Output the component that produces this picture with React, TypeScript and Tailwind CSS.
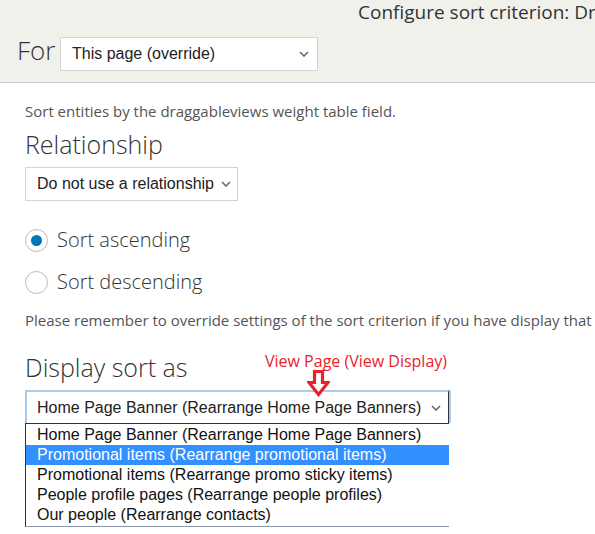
import React from "react";

const OPEN = "font-['Open_Sans','Noto_Sans',sans-serif]";
const ARIAL = "font-['Liberation_Sans',Arial,sans-serif]";

const Chevron = () => (
  <svg width="10" height="6" viewBox="0 0 10 6" className="shrink-0">
    <polyline points="1,1 5,5 9,1" fill="none" stroke="#6b6b6b" strokeWidth="1.6" />
  </svg>
);

const Radio = ({ checked, label }: { checked?: boolean; label: string }) => (
  <div className="flex h-[30px] items-center">
    <span className="flex h-[23px] w-[23px] items-center justify-center rounded-full border border-[#b9b9b9] bg-white">
      {checked && <span className="h-[11px] w-[11px] rounded-full bg-[#0074bd]" />}
    </span>
    <span className={`ml-[9px] text-[20px] font-light leading-[30px] text-[#333] ${OPEN}`}>{label}</span>
  </div>
);

const OPTIONS = [
  "Home Page Banner (Rearrange Home Page Banners)",
  "Promotional items (Rearrange promotional items)",
  "Promotional items (Rearrange promo sticky items)",
  "People profile pages (Rearrange people profiles)",
  "Our people (Rearrange contacts)",
];

export default function App() {
  return (
    <div className="relative h-[534px] w-[595px] overflow-hidden bg-white">
      {/* header */}
      <div className="h-[83px] border-b border-[#cdcdcd] bg-[#f1f1ec]">
        <div
          className={`overflow-hidden whitespace-nowrap pl-[358px] text-[19px] leading-[24px] text-[#333] ${OPEN}`}
        >
          Configure sort criterion: Draggableviews
        </div>
        <div className="mt-[13px] flex items-start pl-[17px]">
          <span className={`w-[43px] text-[26px] font-light leading-[26px] text-[#333] ${OPEN}`}>For</span>
          <div
            className={`flex h-[34px] w-[258px] items-center justify-between border border-[#d4d4d4] bg-white pl-[11px] pr-[8px] text-[16px] text-[#222] ${ARIAL}`}
          >
            <span>This page (override)</span>
            <Chevron />
          </div>
        </div>
      </div>

      {/* body */}
      <div className="px-[25px]">
        <p className={`mt-[18px] text-[15px] leading-[20px] text-[#555] ${OPEN}`}>
          Sort entities by the draggableviews weight table field.
        </p>
        <h2 className={`mt-[7px] text-[25px] font-light leading-[32px] text-[#333] ${OPEN}`}>Relationship</h2>
        <div
          className={`mt-[7px] flex h-[34px] w-[213px] items-center justify-between border border-[#d4d4d4] bg-white pl-[11px] pr-[6px] text-[16px] text-[#222] ${ARIAL}`}
        >
          <span>Do not use a relationship</span>
          <Chevron />
        </div>

        <div className="mt-[24px]">
          <Radio checked label="Sort ascending" />
        </div>
        <div className="mt-[12px]">
          <Radio label="Sort descending" />
        </div>

        <p className={`mt-[13px] whitespace-nowrap text-[15px] leading-[20px] text-[#555] ${OPEN}`}>
          Please remember to override settings of the sort criterion if you have display that
        </p>

        <div className="mt-[21px] grid grid-cols-[240px_auto] items-start">
          <h2 className={`text-[25px] font-light leading-[32px] text-[#333] ${OPEN}`}>Display sort as</h2>
          <span className={`text-[16px] leading-[20px] text-[#e8232b] ${OPEN}`}>View Page (View Display)</span>
        </div>

        <div className="mt-[7px] w-[424px]">
          <div
            className={`flex h-[33px] items-center justify-between border-l-2 border-r border-t-2 border-[#a8cbee] border-r-[#333] bg-white pl-[10px] pr-[7px] text-[16px] text-[#222] shadow-[2px_0_0_#a8cbee] ${ARIAL}`}
          >
            <span>Home Page Banner (Rearrange Home Page Banners)</span>
            <Chevron />
          </div>
          <ul
            className={`border-b border-l border-t border-[#333] border-b-[#8a97a8] bg-white pb-[1px] pt-[1px] text-[16px] ${ARIAL}`}
          >
            {OPTIONS.map((o, i) => (
              <li
                key={i}
                className={`h-[20px] pl-[11px] leading-[20px] ${i === 1 ? "bg-[#3390ff] text-white" : "text-[#111]"}`}
              >
                {o}
              </li>
            ))}
          </ul>
        </div>
      </div>

      {/* annotation arrow */}
      <svg className="absolute left-[307px] top-[370px]" width="23" height="27" viewBox="0 0 23 27">
        <path
          d="M7.5 1.5 H15.5 V12.5 H21 L11.5 24.5 L2 12.5 H7.5 Z"
          fill="#fff"
          stroke="#e8232b"
          strokeWidth="3.2"
          strokeLinejoin="miter"
        />
      </svg>
    </div>
  );
}
